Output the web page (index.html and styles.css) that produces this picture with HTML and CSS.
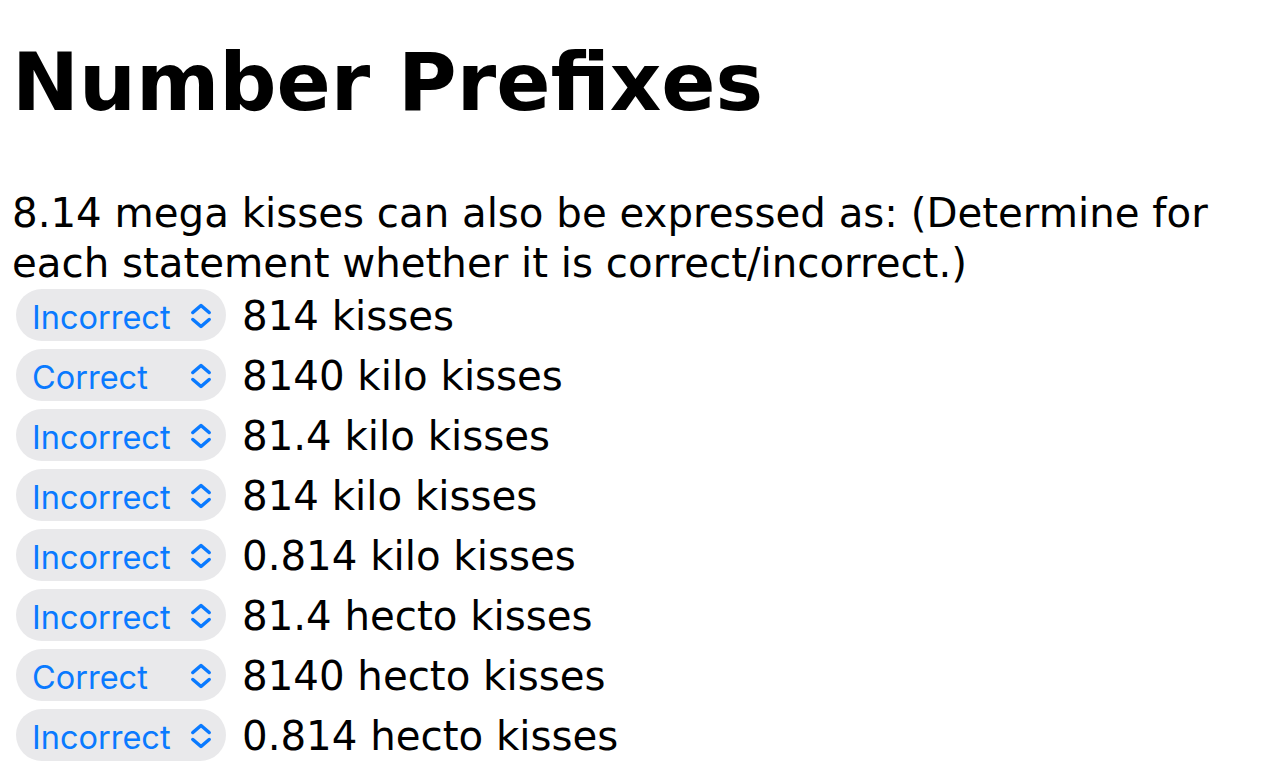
FILE: index.html
```
<!DOCTYPE html>
<html>
<head>
<title>Number Prefixes</title>
<meta http-equiv="Content-Type" content="text/html; charset=utf-8">
<link rel="stylesheet" href="styles.css">
</head>
<body>
<h1 class="tit">Number Prefixes</h1>
<p class="question">8.14 mega kisses can also be expressed as: (Determine for each statement whether it is correct/incorrect.)</p>
<div class="answers">
	<div class="row">
		<div class="pick"><select><option>Correct</option><option selected>Incorrect</option></select><svg class="chev" viewBox="0 0 20 24"><path d="M3 9 L10 3 L17 9 M3 15 L10 21 L17 15"/></svg></div>
		<span class="stmt">814 kisses</span>
	</div>
	<div class="row">
		<div class="pick"><select><option selected>Correct</option><option>Incorrect</option></select><svg class="chev" viewBox="0 0 20 24"><path d="M3 9 L10 3 L17 9 M3 15 L10 21 L17 15"/></svg></div>
		<span class="stmt">8140 kilo kisses</span>
	</div>
	<div class="row">
		<div class="pick"><select><option>Correct</option><option selected>Incorrect</option></select><svg class="chev" viewBox="0 0 20 24"><path d="M3 9 L10 3 L17 9 M3 15 L10 21 L17 15"/></svg></div>
		<span class="stmt">81.4 kilo kisses</span>
	</div>
	<div class="row">
		<div class="pick"><select><option>Correct</option><option selected>Incorrect</option></select><svg class="chev" viewBox="0 0 20 24"><path d="M3 9 L10 3 L17 9 M3 15 L10 21 L17 15"/></svg></div>
		<span class="stmt">814 kilo kisses</span>
	</div>
	<div class="row">
		<div class="pick"><select><option>Correct</option><option selected>Incorrect</option></select><svg class="chev" viewBox="0 0 20 24"><path d="M3 9 L10 3 L17 9 M3 15 L10 21 L17 15"/></svg></div>
		<span class="stmt">0.814 kilo kisses</span>
	</div>
	<div class="row">
		<div class="pick"><select><option>Correct</option><option selected>Incorrect</option></select><svg class="chev" viewBox="0 0 20 24"><path d="M3 9 L10 3 L17 9 M3 15 L10 21 L17 15"/></svg></div>
		<span class="stmt">81.4 hecto kisses</span>
	</div>
	<div class="row">
		<div class="pick"><select><option selected>Correct</option><option>Incorrect</option></select><svg class="chev" viewBox="0 0 20 24"><path d="M3 9 L10 3 L17 9 M3 15 L10 21 L17 15"/></svg></div>
		<span class="stmt">8140 hecto kisses</span>
	</div>
	<div class="row">
		<div class="pick"><select><option>Correct</option><option selected>Incorrect</option></select><svg class="chev" viewBox="0 0 20 24"><path d="M3 9 L10 3 L17 9 M3 15 L10 21 L17 15"/></svg></div>
		<span class="stmt">0.814 hecto kisses</span>
	</div>
</div>
</body>
</html>
```
FILE: styles.css
```
body {
	margin: 0 12px;
	background: #fff;
	color: #000;
	font-family: "DejaVu Sans", Verdana, sans-serif;
	font-size: 40.3px;
}
.tit {
	margin: 35px 0 58px;
	font-size: 80px;
	font-weight: bold;
	line-height: 1.2;
}
.question {
	margin: 0;
	line-height: 50px;
}
.answers {
	display: flex;
	flex-direction: column;
	gap: 8px;
}
.row {
	display: flex;
	align-items: center;
	gap: 16px;
	height: 52px;
}
.pick {
	position: relative;
	width: 210px;
	height: 52px;
	margin-left: 4px;
}
.pick select {
	-webkit-appearance: none;
	appearance: none;
	width: 100%;
	height: 100%;
	border: none;
	border-radius: 26px;
	background: #e9e9eb;
	color: #0a7aff;
	font-family: Inter, Roboto, sans-serif;
	font-size: 32.5px;
	padding: 4px 0 0 16px;
	outline: none;
}
.chev {
	position: absolute;
	right: 13px;
	top: 13px;
	width: 24px;
	height: 28px;
	fill: none;
	stroke: #0a7aff;
	stroke-width: 3;
	stroke-linecap: round;
	stroke-linejoin: round;
	pointer-events: none;
}
.stmt {
	line-height: 52px;
	padding-top: 4px;
}
```
